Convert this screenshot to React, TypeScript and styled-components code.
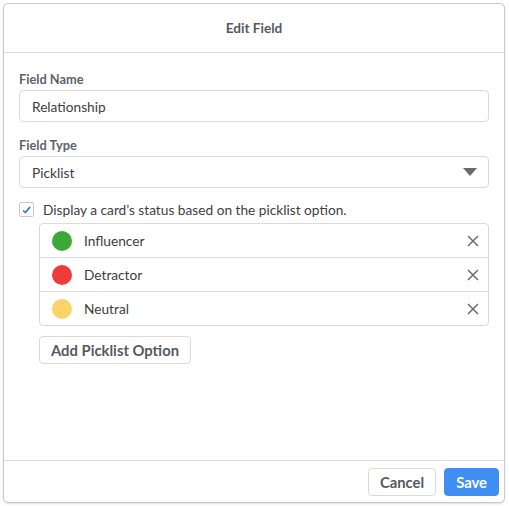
import React from 'react';
import styled, { createGlobalStyle } from 'styled-components';

const GlobalStyle = createGlobalStyle`
  html, body {
    margin: 0;
    padding: 0;
    background: #ffffff;
  }
  body {
    font-family: Lato, 'Open Sans', Arial, sans-serif;
  }
  * {
    box-sizing: border-box;
  }
`;

const Dialog = styled.div`
  margin: 3px;
  width: 502px;
  height: 500px;
  border: 1px solid #c9c9c9;
  border-radius: 5px;
  box-shadow: 0 1px 2px rgba(0, 0, 0, 0.12);
  display: flex;
  flex-direction: column;
  background: #fff;
`;

const Header = styled.div`
  height: 49px;
  border-bottom: 1px solid #dddbda;
  display: flex;
  align-items: center;
  justify-content: center;
`;

const Title = styled.h2`
  margin: 0;
  font-size: 13.6px;
  font-weight: 700;
  color: #545a62;
`;

const Body = styled.div`
  flex: 1;
  padding: 18px 15px 0;
  display: flex;
  flex-direction: column;
`;

const Label = styled.label<{ $top?: number }>`
  display: block;
  font-size: 12.8px;
  line-height: 16px;
  font-weight: 700;
  color: #5e646c;
  margin-top: ${(p) => p.$top ?? 0}px;
  margin-bottom: 3px;
`;

const Input = styled.div`
  height: 32px;
  border: 1px solid #dddbda;
  border-radius: 4px;
  padding: 0 12px;
  display: flex;
  align-items: center;
  font-size: 13.7px;
  color: #3e3e3c;
`;

const Select = styled(Input)`
  justify-content: space-between;
  padding-right: 11px;
`;

const CheckRow = styled.div`
  margin-top: 13px;
  display: flex;
  align-items: center;
  gap: 9px;
  font-size: 13.7px;
  color: #3e3e3c;
`;

const CheckBox = styled.span`
  width: 15px;
  height: 15px;
  border: 1px solid #c9c9c9;
  border-radius: 2px;
  display: flex;
  align-items: center;
  justify-content: center;
`;

const OptionList = styled.div`
  margin: 5px 0 0 20px;
  border: 1px solid #dddbda;
  border-radius: 4px;
`;

const OptionRow = styled.div`
  height: 33px;
  display: flex;
  align-items: center;
  padding: 0 12px;
  font-size: 13.7px;
  color: #3e3e3c;
  & + & {
    height: 34px;
    border-top: 1px solid #dddbda;
  }
`;

const Dot = styled.span<{ $color: string }>`
  width: 20px;
  height: 20px;
  border-radius: 50%;
  background: ${(p) => p.$color};
  margin-right: 12px;
  flex-shrink: 0;
`;

const OptionName = styled.span`
  flex: 1;
`;

const Remove = styled.span`
  display: flex;
  margin-right: -3px;
`;

const Button = styled.button<{ $primary?: boolean }>`
  height: 28px;
  padding: 0 11px;
  border-radius: 4px;
  font-family: inherit;
  font-size: 14.8px;
  font-weight: 700;
  border: 1px solid ${(p) => (p.$primary ? '#3f8ef2' : '#dddbda')};
  background: ${(p) => (p.$primary ? '#3f8ef2' : '#fff')};
  color: ${(p) => (p.$primary ? '#fff' : '#545a62')};
`;

const AddButton = styled(Button)`
  align-self: flex-start;
  margin: 10px 0 0 20px;
`;

const Footer = styled.div`
  border-top: 1px solid #dddbda;
  padding: 7px 5px 6px;
  display: flex;
  justify-content: flex-end;
  gap: 8px;
`;

const options = [
  { name: 'Influencer', color: '#3aa935' },
  { name: 'Detractor', color: '#f03b3b' },
  { name: 'Neutral', color: '#fcd36a' },
];

const CloseIcon = () => (
  <svg width="12" height="12" viewBox="0 0 12 12">
    <path d="M1 1L11 11M11 1L1 11" stroke="#6b6d70" strokeWidth="1.5" />
  </svg>
);

export default function App() {
  return (
    <>
      <GlobalStyle />
      <Dialog>
        <Header>
          <Title>Edit Field</Title>
        </Header>
        <Body>
          <Label>Field Name</Label>
          <Input>Relationship</Input>
          <Label $top={15}>Field Type</Label>
          <Select>
            <span>Picklist</span>
            <svg width="14" height="8" viewBox="0 0 14 8">
              <path d="M0 0H14L7 8Z" fill="#6b6b6b" />
            </svg>
          </Select>
          <CheckRow>
            <CheckBox>
              <svg width="9" height="8" viewBox="0 0 9 8">
                <path d="M1 4.5L3.5 6.5L8 1" stroke="#1b6fd9" strokeWidth="1.6" fill="none" />
              </svg>
            </CheckBox>
            <span>Display a card’s status based on the picklist option.</span>
          </CheckRow>
          <OptionList>
            {options.map((o) => (
              <OptionRow key={o.name}>
                <Dot $color={o.color} />
                <OptionName>{o.name}</OptionName>
                <Remove>
                  <CloseIcon />
                </Remove>
              </OptionRow>
            ))}
          </OptionList>
          <AddButton>Add Picklist Option</AddButton>
        </Body>
        <Footer>
          <Button>Cancel</Button>
          <Button $primary>Save</Button>
        </Footer>
      </Dialog>
    </>
  );
}
